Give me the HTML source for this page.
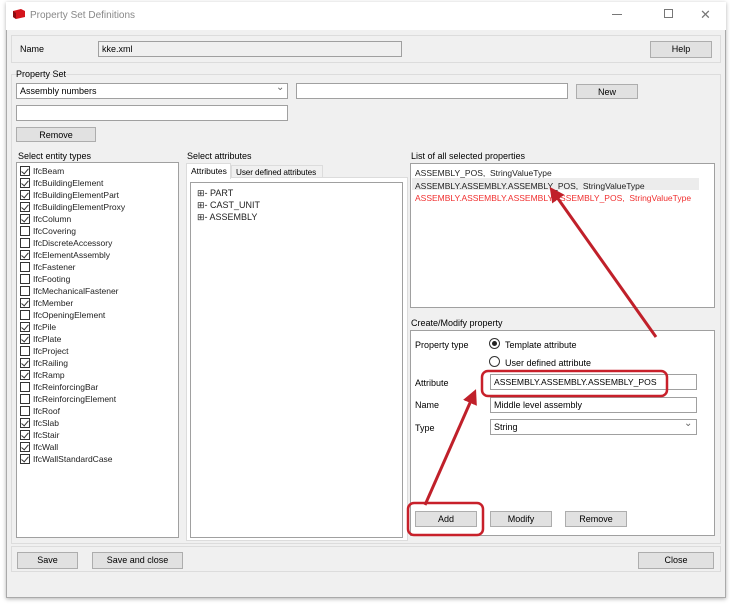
<!DOCTYPE html>
<html><head><style>
*{box-sizing:border-box;margin:0;padding:0}
body{width:730px;height:604px;background:#fff;position:relative;overflow:hidden;font-family:"Liberation Sans",sans-serif;font-size:9px;color:#000}
.a{position:absolute;white-space:nowrap}
.win{left:6px;top:2px;width:720px;height:596px;border:1px solid #aaa;background:#f0f0f0;box-shadow:0 1px 4px rgba(0,0,0,.3)}
.title{left:6px;top:2px;width:720px;height:28px;background:#fff}
.grp{border:1px solid #dcdcdc}
.box{background:#fff;border:1px solid #a0a0a0}
.btn{background:#e1e1e1;border:1px solid #adadad;text-align:center;line-height:15px}
.inp{background:#fff;border:1px solid #a0a0a0;padding-left:3px;line-height:14px;overflow:hidden}
.ck{position:absolute;left:3px;width:10px;height:10px;border:1px solid #333;background:#fff}
.ck.on::after{content:"";position:absolute;left:2px;top:0px;width:3px;height:6px;border:solid #333;border-width:0 1.3px 1.3px 0;transform:rotate(40deg)}
.it{position:absolute;left:16px;font-size:8.5px;line-height:12px;color:#222;white-space:nowrap}
</style></head><body>
<div class="a win"></div>
<div class="a title"></div>
<svg class="a" style="left:12px;top:8px" width="14" height="12"><path d="M1 3 L9 1 L13 3 L13 9 L4 11 L1 9Z" fill="#d4141c"/><path d="M1 9 L4 11 L4 5 L1 3Z" fill="#8a0c10"/></svg>
<div class="a" style="left:30px;top:10px;color:#888;font-size:10px">Property Set Definitions</div>
<div class="a" style="left:612px;top:14px;width:10px;height:1px;background:#777"></div>
<div class="a" style="left:664px;top:9px;width:9px;height:9px;border:1px solid #777"></div>
<div class="a" style="left:700px;top:7px;color:#777;font-size:13px">✕</div>

<div class="a grp" style="left:11px;top:35px;width:710px;height:28px"></div>
<div class="a" style="left:20px;top:44px">Name</div>
<div class="a inp" style="left:98px;top:41px;width:304px;height:16px;background:#f0f0f0">kke.xml</div>
<div class="a btn" style="left:650px;top:41px;width:62px;height:17px">Help</div>

<div class="a grp" style="left:11px;top:74px;width:710px;height:470px"></div>
<div class="a" style="left:16px;top:69px">Property Set</div>
<div class="a inp" style="left:16px;top:83px;width:272px;height:16px">Assembly numbers</div>
<div class="a" style="left:276px;top:82px;color:#666;font-size:10px">⌄</div>
<div class="a inp" style="left:296px;top:83px;width:272px;height:16px"></div>
<div class="a btn" style="left:576px;top:84px;width:62px;height:15px">New</div>
<div class="a inp" style="left:16px;top:105px;width:272px;height:16px"></div>
<div class="a btn" style="left:16px;top:127px;width:80px;height:15px">Remove</div>

<div class="a" style="left:18px;top:151px">Select entity types</div>
<div class="a box" style="left:16px;top:162px;width:163px;height:376px">
<div style="position:relative">
<div class="ck on" style="top:3px"></div><div class="it" style="top:2px">IfcBeam</div>
<div class="ck on" style="top:15px"></div><div class="it" style="top:14px">IfcBuildingElement</div>
<div class="ck on" style="top:27px"></div><div class="it" style="top:26px">IfcBuildingElementPart</div>
<div class="ck on" style="top:39px"></div><div class="it" style="top:38px">IfcBuildingElementProxy</div>
<div class="ck on" style="top:51px"></div><div class="it" style="top:50px">IfcColumn</div>
<div class="ck" style="top:63px"></div><div class="it" style="top:62px">IfcCovering</div>
<div class="ck" style="top:75px"></div><div class="it" style="top:74px">IfcDiscreteAccessory</div>
<div class="ck on" style="top:87px"></div><div class="it" style="top:86px">IfcElementAssembly</div>
<div class="ck" style="top:99px"></div><div class="it" style="top:98px">IfcFastener</div>
<div class="ck" style="top:111px"></div><div class="it" style="top:110px">IfcFooting</div>
<div class="ck" style="top:123px"></div><div class="it" style="top:122px">IfcMechanicalFastener</div>
<div class="ck on" style="top:135px"></div><div class="it" style="top:134px">IfcMember</div>
<div class="ck" style="top:147px"></div><div class="it" style="top:146px">IfcOpeningElement</div>
<div class="ck on" style="top:159px"></div><div class="it" style="top:158px">IfcPile</div>
<div class="ck on" style="top:171px"></div><div class="it" style="top:170px">IfcPlate</div>
<div class="ck" style="top:183px"></div><div class="it" style="top:182px">IfcProject</div>
<div class="ck on" style="top:195px"></div><div class="it" style="top:194px">IfcRailing</div>
<div class="ck on" style="top:207px"></div><div class="it" style="top:206px">IfcRamp</div>
<div class="ck" style="top:219px"></div><div class="it" style="top:218px">IfcReinforcingBar</div>
<div class="ck" style="top:231px"></div><div class="it" style="top:230px">IfcReinforcingElement</div>
<div class="ck" style="top:243px"></div><div class="it" style="top:242px">IfcRoof</div>
<div class="ck on" style="top:255px"></div><div class="it" style="top:254px">IfcSlab</div>
<div class="ck on" style="top:267px"></div><div class="it" style="top:266px">IfcStair</div>
<div class="ck on" style="top:279px"></div><div class="it" style="top:278px">IfcWall</div>
<div class="ck on" style="top:291px"></div><div class="it" style="top:290px">IfcWallStandardCase</div>
</div></div>

<div class="a" style="left:187px;top:151px">Select attributes</div>
<div class="a" style="left:186px;top:177px;width:222px;height:364px;background:#fff;border:1px solid #dcdcdc"></div>
<div class="a" style="left:186px;top:163px;width:45px;height:16px;background:#fff;border:1px solid #dcdcdc;border-bottom:none;padding:2px 0 0 4px;font-size:8.5px">Attributes</div>
<div class="a" style="left:231px;top:165px;width:92px;height:13px;border:1px solid #dcdcdc;border-bottom:none;padding:2px 0 0 4px;font-size:8.2px;letter-spacing:-0.1px;overflow:hidden">User defined attributes</div>
<div class="a box" style="left:190px;top:182px;width:213px;height:356px"></div>
<div class="a" style="left:197px;top:187px;font-size:9px;line-height:12px;color:#222">⊞- PART<br>⊞- CAST_UNIT<br>⊞- ASSEMBLY</div>

<div class="a" style="left:411px;top:151px">List of all selected properties</div>
<div class="a box" style="left:410px;top:163px;width:305px;height:145px"></div>
<div class="a" style="left:412px;top:178px;width:287px;height:12px;background:#ececec"></div>
<div class="a" style="left:415px;top:167px;font-size:8.5px;line-height:12.5px;color:#222">ASSEMBLY_POS, &nbsp;StringValueType<br>ASSEMBLY.ASSEMBLY.ASSEMBLY_POS, &nbsp;StringValueType<br><span style="color:#f03030">ASSEMBLY.ASSEMBLY.ASSEMBLY.ASSEMBLY_POS, &nbsp;StringValueType</span></div>

<div class="a" style="left:411px;top:318px">Create/Modify property</div>
<div class="a box" style="left:410px;top:330px;width:305px;height:206px"></div>
<div class="a" style="left:415px;top:340px">Property type</div>
<div class="a" style="left:489px;top:338px;width:11px;height:11px;border:1px solid #333;border-radius:50%;background:#fff"><div style="margin:2px;width:5px;height:5px;border-radius:50%;background:#222"></div></div>
<div class="a" style="left:505px;top:340px">Template attribute</div>
<div class="a" style="left:489px;top:356px;width:11px;height:11px;border:1px solid #333;border-radius:50%;background:#fff"></div>
<div class="a" style="left:505px;top:358px">User defined attribute</div>
<div class="a" style="left:415px;top:378px">Attribute</div>
<div class="a inp" style="left:490px;top:374px;width:207px;height:16px;font-size:8.6px">ASSEMBLY.ASSEMBLY.ASSEMBLY_POS</div>
<div class="a" style="left:415px;top:400px">Name</div>
<div class="a inp" style="left:490px;top:397px;width:207px;height:16px">Middle level assembly</div>
<div class="a" style="left:415px;top:423px">Type</div>
<div class="a inp" style="left:490px;top:419px;width:207px;height:16px">String</div>
<div class="a" style="left:684px;top:418px;color:#666;font-size:10px">⌄</div>
<div class="a btn" style="left:415px;top:511px;width:62px;height:16px">Add</div>
<div class="a btn" style="left:490px;top:511px;width:62px;height:16px">Modify</div>
<div class="a btn" style="left:565px;top:511px;width:62px;height:16px">Remove</div>

<div class="a grp" style="left:11px;top:546px;width:710px;height:26px"></div>
<div class="a btn" style="left:17px;top:552px;width:61px;height:17px">Save</div>
<div class="a btn" style="left:92px;top:552px;width:91px;height:17px">Save and close</div>
<div class="a btn" style="left:638px;top:552px;width:76px;height:17px">Close</div>

<svg class="a" style="left:0;top:0" width="730" height="604">
<defs><marker id="ah" markerWidth="5" markerHeight="5" refX="2.5" refY="2.5" orient="auto"><path d="M0 0 L5 2.5 L0 5Z" fill="#c0202a"/></marker></defs>
<rect x="482" y="371" width="185" height="25" rx="6" fill="none" stroke="#c8202a" stroke-width="2.5"/>
<rect x="408" y="503" width="75" height="32" rx="6" fill="none" stroke="#c8202a" stroke-width="2.5"/>
<line x1="656" y1="337" x2="554" y2="193" stroke="#c0202a" stroke-width="3" marker-end="url(#ah)"/>
<line x1="425" y1="505" x2="473" y2="396" stroke="#c0202a" stroke-width="3" marker-end="url(#ah)"/>
</svg>
</body></html>
